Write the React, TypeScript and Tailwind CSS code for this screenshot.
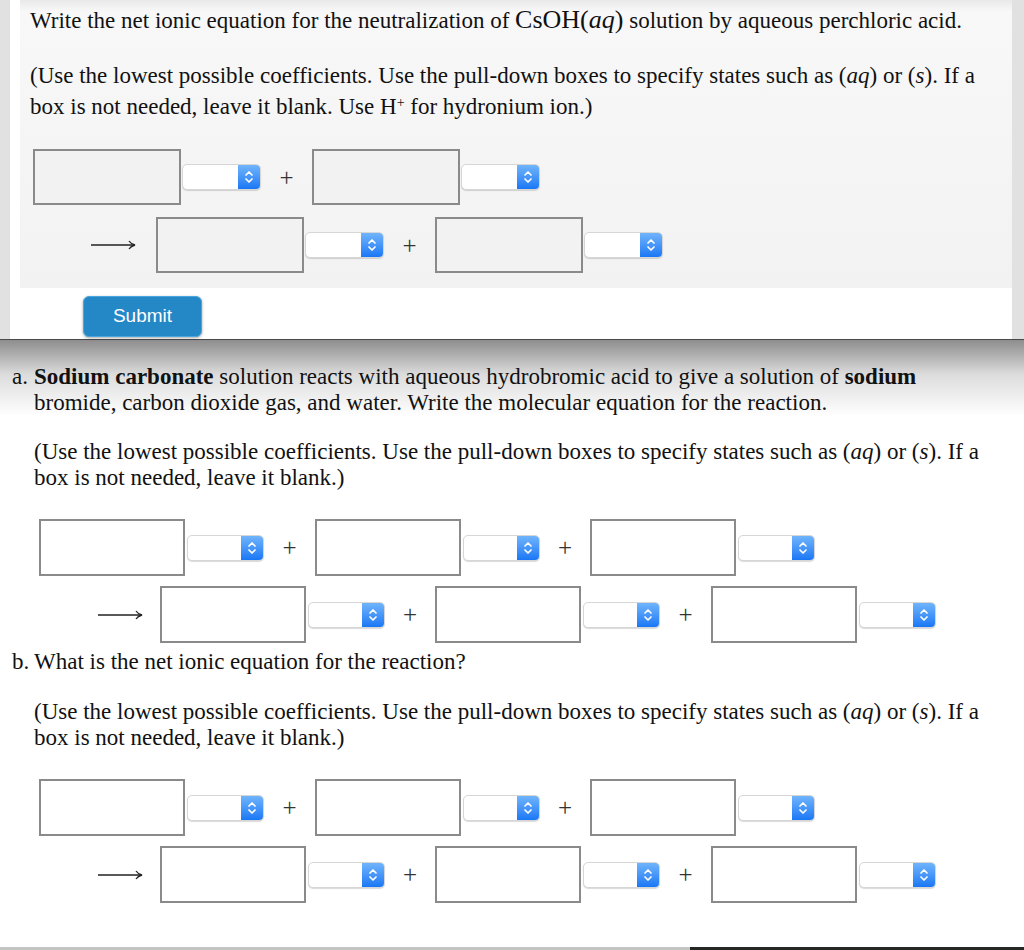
import React from 'react';

const serif = { fontFamily: '"Liberation Serif", "Times New Roman", serif' };

const StateSelect: React.FC<{ wide?: boolean }> = ({ wide }) => (
  <div
    className={`flex h-[26px] ${wide ? 'w-[79px]' : 'w-[77px]'} overflow-hidden rounded-[5px] border border-[#d6d6d6] bg-white shadow-[0_1px_1px_rgba(0,0,0,0.15)]`}
  >
    <div className="flex-1" />
    <div className="flex w-[22px] items-center justify-center bg-linear-to-b from-[#6fb4fb] to-[#1877f5]">
      <svg width="10" height="16" viewBox="0 0 10 16" fill="none">
        <path d="M2 6 L5 3 L8 6" stroke="white" strokeWidth="1.7" strokeLinecap="round" strokeLinejoin="round" />
        <path d="M2 10 L5 13 L8 10" stroke="white" strokeWidth="1.7" strokeLinecap="round" strokeLinejoin="round" />
      </svg>
    </div>
  </div>
);

const Box: React.FC<{ top?: boolean }> = ({ top }) => (
  <div
    className={
      top
        ? 'h-[56px] w-[148px] border-2 border-[#8a8a8a] bg-[#f2f2f2]'
        : 'h-[57px] w-[146px] border-2 border-[#8a8a8a] bg-white'
    }
  />
);

const Plus: React.FC<{ w: string }> = ({ w }) => (
  <div className={`${w} text-center text-[25px] leading-none text-[#333]`} style={serif}>
    +
  </div>
);

const Arrow: React.FC = () => (
  <svg width="46" height="14" viewBox="0 0 46 14" fill="none">
    <path d="M1 7 H44" stroke="#222" strokeWidth="1.4" />
    <path d="M39 3 Q41 6 45 7 Q41 8 39 11" stroke="#222" strokeWidth="1.3" fill="none" />
  </svg>
);

const Term: React.FC<{ top?: boolean; plus?: string }> = ({ top, plus }) => (
  <>
    <Box top={top} />
    <div className={top ? 'ml-[1px]' : 'ml-[2px]'}>
      <StateSelect wide={top} />
    </div>
    {plus && <Plus w={plus} />}
  </>
);

const Instructions: React.FC<{ className?: string }> = ({ className }) => (
  <p className={`whitespace-nowrap ${className ?? ''}`}>
    (Use the lowest possible coefficients. Use the pull-down boxes to specify states such as (<i>aq</i>) or (
    <i>s</i>). If a
    <br />
    box is not needed, leave it blank.)
  </p>
);

const LowerEquation: React.FC = () => (
  <div className="ml-[5px]">
    <div className="flex items-center">
      <Term plus="w-[51px]" />
      <Term plus="w-[50px]" />
      <Term />
    </div>
    <div className="mt-[10px] flex items-center">
      <div className="ml-[58px] mr-[17px]">
        <Arrow />
      </div>
      <Term plus="w-[50px]" />
      <Term plus="w-[51px]" />
      <Term />
    </div>
  </div>
);

export default function App() {
  return (
    <div className="relative h-[950px] w-[1024px] overflow-hidden bg-white text-[#111]" style={serif}>
      {/* first question */}
      <div className="flex h-[339px]">
        <div className="w-[10px] bg-[#e1e1e1]" />
        <div className="flex-1 bg-white pl-[10px]">
          <div className="bg-[#f5f5f5] bg-linear-to-b from-[#e9e9e9] via-[#f8f8f8] via-[4%] to-[#f2f2f2] pb-[15px] pl-[10px] pt-[7px]">
            <p className="whitespace-nowrap text-[23px] leading-[26px]">
              Write the net ionic equation for the neutralization of{' '}
              <span className="text-[26px]">
                CsOH(<i>aq</i>)
              </span>{' '}
              solution by aqueous perchloric acid.
            </p>
            <p className="mt-[26px] whitespace-nowrap text-[23px] leading-[31px]">
              (Use the lowest possible coefficients. Use the pull-down boxes to specify states such as (<i>aq</i>) or (
              <i>s</i>). If a
              <br />
              box is not needed, leave it blank. Use H<sup className="text-[14px]">+</sup> for hydronium ion.)
            </p>
            <div className="ml-[3px] mt-[27px] flex items-center">
              <Term top plus="w-[51px]" />
              <Term top />
            </div>
            <div className="ml-[3px] mt-[12px] flex items-center">
              <div className="ml-[57px] mr-[20px]">
                <Arrow />
              </div>
              <Term top plus="w-[51px]" />
              <Term top />
            </div>
          </div>
          <button
            className="ml-[63px] mt-[8px] h-[41px] w-[119px] rounded-[6px] border border-[#4aa6dd] bg-[#2487c6] text-[19px] text-white shadow-[0_1px_3px_rgba(0,0,0,0.35)]"
            style={{ fontFamily: '"Liberation Sans", Arial, sans-serif' }}
          >
            Submit
          </button>
        </div>
        <div className="w-[12px] bg-[#e1e1e1]" />
      </div>
      <div className="h-[1px] bg-[#4a4a4a]" />

      {/* second question */}
      <div className="bg-linear-to-b from-[#8e8e8e] via-[#dcdcdc] via-[45%] to-white pt-[24px]">
        <div className="flex whitespace-nowrap text-[23px] leading-[26px]">
          <div className="w-[34px] pl-[12px]">a.</div>
          <div className="flex-1">
            <b>Sodium carbonate</b> solution reacts with aqueous hydrobromic acid to give a solution of <b>sodium</b>
            <br />
            bromide, carbon dioxide gas, and water. Write the molecular equation for the reaction.
          </div>
        </div>
      </div>
      <div className="pl-[34px] text-[23px] leading-[26px]">
        <Instructions className="mt-[23px]" />
        <div className="mt-[28px]">
          <LowerEquation />
        </div>
      </div>

      <div className="mt-[6px] flex text-[23px] leading-[26px]">
        <div className="w-[34px] pl-[12px]">b.</div>
        <div className="flex-1">What is the net ionic equation for the reaction?</div>
      </div>
      <div className="pl-[34px] text-[23px] leading-[26px]">
        <Instructions className="mt-[24px]" />
        <div className="mt-[28px]">
          <LowerEquation />
        </div>
      </div>

      <div className="absolute bottom-0 left-0 flex h-[3px] w-full">
        <div className="w-[690px] bg-[#c4c4c4]" />
        <div className="flex-1 bg-[#262626]" />
      </div>
    </div>
  );
}
